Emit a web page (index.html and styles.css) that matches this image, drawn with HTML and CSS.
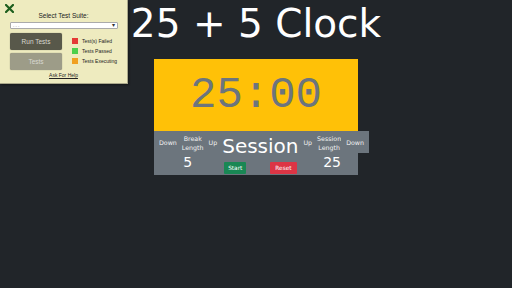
FILE: index.html
```html
<!DOCTYPE html>
<html>
<head>
<meta charset="utf-8">
<link rel="stylesheet" href="styles.css">
</head>
<body>
<div class="fcc">
  <svg class="fcc-close" width="9" height="9" viewBox="0 0 9 9"><path d="M1 1L8 8M8 1L1 8" stroke="#1d5e1d" stroke-width="2.2" stroke-linecap="square"/></svg>
  <div class="fcc-label">Select Test Suite:</div>
  <div class="fcc-select"><span>- - -</span><span class="caret">▾</span></div>
  <div class="fcc-body">
    <div class="fcc-btns">
      <div class="fcc-btn run">Run Tests</div>
      <div class="fcc-btn tests">Tests</div>
    </div>
    <div class="fcc-legend">
      <div class="leg"><span class="sq red"></span>Test(s) Failed</div>
      <div class="leg"><span class="sq green"></span>Tests Passed</div>
      <div class="leg"><span class="sq orange"></span>Tests Executing</div>
    </div>
  </div>
  <div class="fcc-help">Ask For Help</div>
</div>

<main class="app">
  <h1 class="title">25 + 5 Clock</h1>
  <div class="clock">
    <div class="timer">25:00</div>
  </div>
  <div class="panel">
    <div class="controls">
      <div class="ctl">Down</div>
      <div class="col">
        <div class="lbl">Break<br>Length</div>
        <div class="val val-break">5</div>
      </div>
      <div class="ctl">Up</div>
      <div class="col">
        <div class="session">Session</div>
        <div class="btns">
          <span class="btn start">Start</span>
          <span class="btn reset">Reset</span>
        </div>
      </div>
      <div class="ctl">Up</div>
      <div class="col">
        <div class="lbl">Session<br>Length</div>
        <div class="val val-session">25</div>
      </div>
      <div class="ctl last">Down</div>
    </div>
  </div>
</main>
</body>
</html>
```
FILE: styles.css
```css
html, body {
  margin: 0;
  padding: 0;
}
body {
  background: #212529;
  width: 512px;
  height: 288px;
  overflow: hidden;
  font-family: "DejaVu Sans", sans-serif;
  color: #fff;
  position: relative;
}
.fcc {
  position: absolute;
  left: 0;
  top: 0;
  width: 127px;
  height: 83px;
  background: #eeebbf;
  border-right: 1px solid #a9a78a;
  border-bottom: 1px solid #a9a78a;
  box-shadow: 1px 1px 2px rgba(0,0,0,0.4);
  font-family: "Liberation Sans", Arial, sans-serif;
  color: #222;
  z-index: 5;
}
.fcc-close {
  position: absolute;
  left: 5px;
  top: 4px;
}
.fcc-label {
  text-align: center;
  font-size: 6.5px;
  padding-top: 12px;
  height: 9px;
}
.fcc-select {
  margin: 1px 9px 0 10px;
  height: 5px;
  background: #fff;
  border: 1px solid #aaa;
  border-radius: 1px;
  font-size: 4px;
  line-height: 5px;
  color: #555;
  display: flex;
  justify-content: space-between;
  padding: 0 2px;
}
.caret {
  font-size: 6px;
  color: #333;
}
.fcc-body {
  display: flex;
  gap: 10px;
  padding: 4px 0 0 10px;
}
.fcc-btns {
  display: flex;
  flex-direction: column;
  gap: 3px;
}
.fcc-btn {
  width: 52px;
  height: 17px;
  border-radius: 2px;
  font-size: 6.5px;
  line-height: 17px;
  text-align: center;
  color: #d8d8d0;
  box-shadow: 0 0 1px rgba(0,0,0,0.5);
}
.fcc-btn.run {
  background: #58584a;
}
.fcc-btn.tests {
  background: #9d9c88;
}
.fcc-legend {
  display: flex;
  flex-direction: column;
  gap: 4px;
  padding-top: 5px;
}
.leg {
  display: flex;
  align-items: center;
  gap: 4px;
  font-size: 5px;
  height: 6px;
}
.sq {
  width: 6px;
  height: 6px;
  display: inline-block;
}
.sq.red { background: #e53935; }
.sq.green { background: #4cd04c; }
.sq.orange { background: #f0a020; }
.fcc-help {
  text-align: center;
  font-size: 5px;
  text-decoration: underline;
  padding-top: 2px;
}

.app {
  display: flex;
  flex-direction: column;
  align-items: center;
}
.title {
  margin: 0;
  font-weight: normal;
  font-size: 39px;
  line-height: 48px;
  height: 59px;
}
.clock {
  width: 204px;
  height: 72px;
  background: #ffc107;
  display: flex;
  justify-content: center;
  align-items: center;
}
.timer {
  font-family: "Liberation Mono", monospace;
  font-size: 44px;
  color: #6c757d;
}
.panel {
  width: 204px;
  height: 44px;
  background: #6c757d;
}
.controls {
  display: flex;
  align-items: flex-start;
  width: max-content;
  padding-left: 5px;
  gap: 5px;
  color: #f2f2f2;
}
.ctl {
  font-size: 6.3px;
  line-height: 23px;
  height: 22px;
  background: #6c757d;
}
.ctl.last {
  padding-right: 5px;
  margin-left: -5px;
  padding-left: 5px;
}
.col {
  display: flex;
  flex-direction: column;
  align-items: center;
}
.lbl {
  font-size: 6.3px;
  line-height: 9px;
  padding-top: 3px;
  text-align: center;
}
.val {
  font-size: 14px;
  line-height: 16px;
  margin-top: 2px;
  color: #fff;
}
.val-break {
  margin-right: 10px;
}
.val-session {
  margin-left: 6px;
}
.session {
  font-size: 20px;
  line-height: 24px;
  padding-top: 3px;
  color: #fff;
}
.btns {
  display: flex;
  gap: 24px;
  margin-top: 4px;
}
.btn {
  font-size: 5.8px;
  line-height: 12px;
  height: 12px;
  border-radius: 1px;
  color: #fff;
}
.btn.start { background: #198754; padding: 0 4px; }
.btn.reset { background: #dc3545; padding: 0 5px; }
```
